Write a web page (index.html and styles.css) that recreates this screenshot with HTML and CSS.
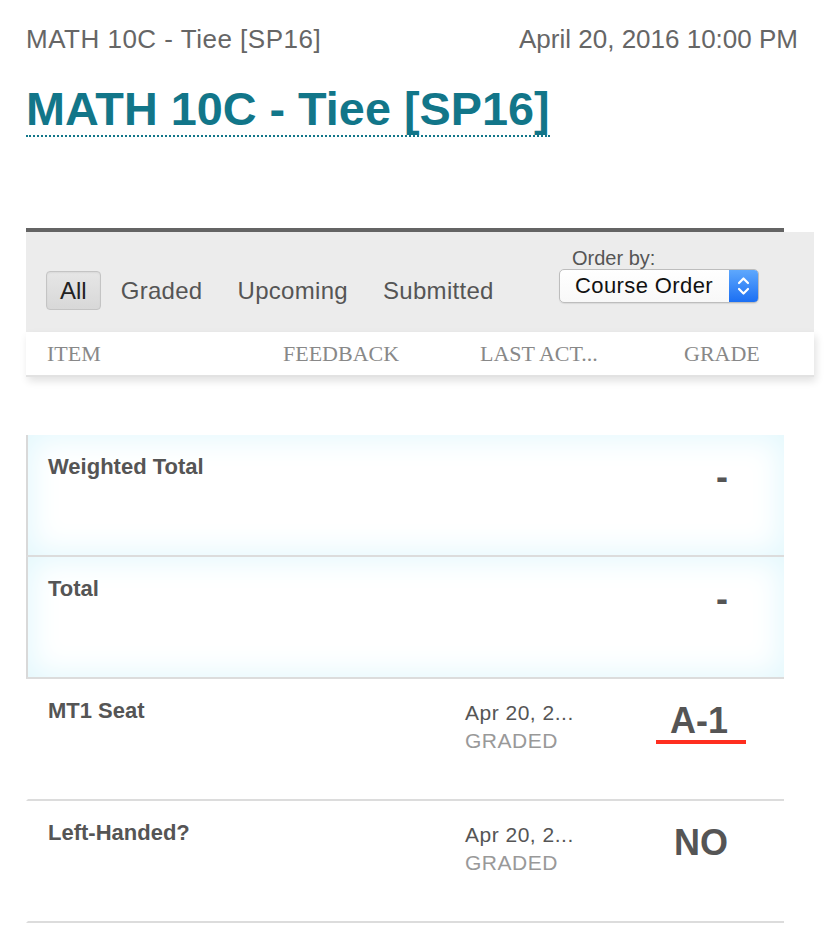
FILE: index.html
```html
<!DOCTYPE html>
<html lang="en">
<head>
<meta charset="utf-8">
<title>MATH 10C - Tiee [SP16]</title>
<link rel="stylesheet" href="styles.css">
</head>
<body>
<div class="page">
  <div class="topbar">
    <span class="course">MATH 10C - Tiee [SP16]</span>
    <span class="stamp">April 20, 2016 10:00 PM</span>
  </div>
  <h1 class="title"><span class="title-text">MATH 10C - Tiee [SP16]</span></h1>
  <div class="rule"></div>
  <div class="sticky">
    <div class="toolbar">
      <div class="tabs">
        <span class="tab active">All</span>
        <span class="tab">Graded</span>
        <span class="tab">Upcoming</span>
        <span class="tab">Submitted</span>
      </div>
      <div class="order">
        <div class="order-label">Order by:</div>
        <div class="select">
          <span class="select-value">Course Order</span>
          <span class="select-arrows">
            <svg width="29" height="32" viewBox="0 0 29 32" aria-hidden="true">
              <polyline points="10,13 14.5,8.5 19,13" fill="none" stroke="#fff" stroke-width="2.2" stroke-linecap="round" stroke-linejoin="round"/>
              <polyline points="10,19 14.5,23.5 19,19" fill="none" stroke="#fff" stroke-width="2.2" stroke-linecap="round" stroke-linejoin="round"/>
            </svg>
          </span>
        </div>
      </div>
    </div>
    <div class="colhead">
      <span>ITEM</span>
      <span>FEEDBACK</span>
      <span>LAST ACT...</span>
      <span>GRADE</span>
    </div>
  </div>
  <div class="rows">
    <div class="row total">
      <div class="name">Weighted Total</div>
      <div class="date"></div>
      <div class="grade"><span>-</span></div>
    </div>
    <div class="row total">
      <div class="name">Total</div>
      <div class="date"></div>
      <div class="grade"><span>-</span></div>
    </div>
    <div class="row">
      <div class="name">MT1 Seat</div>
      <div class="date"><div>Apr 20, 2...</div><div class="status">GRADED</div></div>
      <div class="grade"><span>A-1</span><span class="grade-bar"></span></div>
    </div>
    <div class="row">
      <div class="name">Left-Handed?</div>
      <div class="date"><div>Apr 20, 2...</div><div class="status">GRADED</div></div>
      <div class="grade"><span>NO</span></div>
    </div>
  </div>
</div>
</body>
</html>
```

FILE: styles.css
```css
html, body {
  margin: 0;
  padding: 0;
  background: #fff;
}

body {
  font-family: "Liberation Sans", Arial, Helvetica, sans-serif;
}

.page {
  padding-left: 26px;
  width: 758px;
}

.topbar {
  display: flex;
  justify-content: space-between;
  width: 772px;
  padding-top: 24px;
  font-size: 26px;
  line-height: 30px;
  color: #666;
}

.course {
  letter-spacing: 0.5px;
}

.title {
  display: flex;
  margin: 29px 0 0;
  font-size: 46.8px;
  line-height: 52px;
  font-weight: bold;
  color: #127689;
}

.title-text {
  border-bottom: 2px dotted #127689;
}

.rule {
  margin-top: 91px;
  height: 4px;
  background: #646464;
}

.sticky {
  width: 788px;
}

.toolbar {
  display: flex;
  align-items: flex-start;
  height: 100px;
  box-sizing: border-box;
  padding: 0 55px 0 20px;
  background: #ececec;
}

.tabs {
  display: flex;
  margin-top: 39px;
}

.tab {
  height: 39px;
  box-sizing: border-box;
  padding: 0 14px;
  margin-right: 5px;
  border: 1px solid transparent;
  border-radius: 4px;
  font-size: 24px;
  line-height: 37px;
  letter-spacing: 0.3px;
  color: #555;
}

.tab.active {
  padding: 0 13px;
  letter-spacing: 0;
  background: linear-gradient(#e6e6e6, #d8d8d8);
  border-color: #c4c4c4;
  color: #222;
  box-shadow: inset 0 1px 2px rgba(0, 0, 0, 0.06);
}

.order {
  margin-left: auto;
  margin-top: 15px;
  width: 200px;
}

.order-label {
  padding-left: 13px;
  font-size: 20px;
  line-height: 22px;
  color: #555;
}

.select {
  display: flex;
  height: 34px;
  box-sizing: border-box;
  border: 1px solid #bdbdbd;
  border-radius: 5px;
  overflow: hidden;
  background: linear-gradient(#ffffff, #f8f8f8);
  box-shadow: 0 1px 1px rgba(0, 0, 0, 0.08);
}

.select-value {
  flex: 1;
  padding-left: 15px;
  font-size: 22px;
  line-height: 32px;
  letter-spacing: 0.4px;
  color: #111;
}

.select-arrows {
  display: flex;
  align-items: center;
  justify-content: center;
  width: 29px;
  background: linear-gradient(#5ea8fd, #1b6ff3);
}

.colhead {
  display: grid;
  grid-template-columns: 236px 197px 204px 1fr;
  height: 45px;
  box-sizing: border-box;
  padding-left: 21px;
  background: #fff;
  border-bottom: 2px solid #e2e2e2;
  box-shadow: 2px 4px 8px rgba(0, 0, 0, 0.12);
  font-family: "Liberation Serif", "Times New Roman", serif;
  font-size: 22px;
  line-height: 43px;
  color: #888;
}

.rows {
  margin-top: 58px;
}

.row {
  display: grid;
  grid-template-columns: 417px 1fr auto;
  height: 122px;
  box-sizing: border-box;
  padding: 18px 56px 0 20px;
  border-left: 2px solid transparent;
  border-bottom: 2px solid #dcdcdc;
}

.row.total {
  border-left-color: #d9d9d9;
  box-shadow: inset 0 0 30px 4px #e3f8fd;
}

.name {
  font-size: 22px;
  line-height: 28px;
  font-weight: bold;
  color: #555;
}

.date {
  margin-top: 2px;
  font-size: 21px;
  line-height: 28px;
  letter-spacing: 0.5px;
  color: #555;
}

.status {
  color: #999;
}

.grade {
  display: flex;
  flex-direction: column;
  align-items: flex-end;
  padding-top: 4px;
  font-size: 36px;
  line-height: 40px;
  font-weight: bold;
  color: #555;
}

.grade-bar {
  width: 90px;
  height: 4px;
  margin-top: -1px;
  margin-right: -18px;
  background: #ff2e1f;
}
```
